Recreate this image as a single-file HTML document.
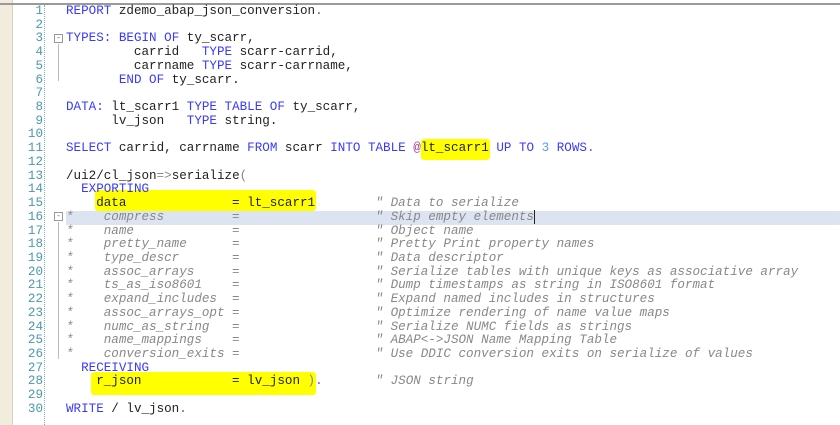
<!DOCTYPE html>
<html><head><meta charset="utf-8"><style>
body{margin:0;width:840px;height:425px;background:#fff;position:relative;overflow:hidden;font-family:"Liberation Mono",monospace;font-size:12.58px}
.strip{position:absolute;left:0;top:0;width:12px;height:425px;background:#f1ecdd;border-right:1px solid #d8d2c0}
.top{position:absolute;left:0;top:3px;width:840px;height:2px;background:#9a9a9a}
.sep{position:absolute;left:44px;top:5px;height:420px;border-left:1px dotted #7ab0b8}
.hl{position:absolute;left:66px;top:211px;width:774px;height:13.5px;background:#dbe4f0}
.y{position:absolute;background:#ffff00;border-radius:3px}
.ln{position:absolute;left:12px;width:31px;text-align:right;color:#4a9aa8;white-space:pre;line-height:13.72px}
.c{position:absolute;left:66px;white-space:pre;color:#222;line-height:13.72px}
.k{color:#3a3aff}.g{color:#888;font-style:italic}.p{color:#a040a0}.n{color:#5a9aff}.o{color:#888}
.fold{position:absolute;left:54px;width:7px;height:7px;border:1px solid #999;font-size:8px;line-height:7px;text-align:center;color:#666;background:#fff}
.vl{position:absolute;left:58px;border-left:1px solid #bbb}
.cur{position:absolute;left:534px;top:210px;width:1px;height:14px;background:#222}
</style></head><body>
<div class="strip"></div><div class="top"></div><div class="sep"></div>
<div class="hl"></div>
<div class="y" style="left:95px;top:190px;width:221px;height:21px"></div>
<div class="y" style="left:421px;top:139px;width:69px;height:21px"></div>
<div class="y" style="left:91px;top:372px;width:225px;height:23px"></div>
<div class="fold" style="top:34px">-</div><div class="vl" style="top:44px;height:37px"></div>
<div class="fold" style="top:212px">-</div><div class="vl" style="top:222px;height:137px"></div>
<div class="cur"></div>
<div class="ln" style="top:5px">1
2
3
4
5
6
7
8
9
10
11
12
13
14
15
16
17
18
19
20
21
22
23
24
25
26
27
28
29
30</div>
<div class="c" style="top:5px"><span class="k">REPORT</span> zdemo_abap_json_conversion<span class="p">.</span>

<span class="k">TYPES:</span> <span class="k">BEGIN OF</span> ty_scarr,
         carrid   <span class="k">TYPE</span> scarr-carrid,
         carrname <span class="k">TYPE</span> scarr-carrname,
       <span class="k">END OF</span> ty_scarr.

<span class="k">DATA:</span> lt_scarr1 <span class="k">TYPE TABLE OF</span> ty_scarr,
      lv_json   <span class="k">TYPE</span> string.

<span class="k">SELECT</span> carrid, carrname <span class="k">FROM</span> scarr <span class="k">INTO TABLE</span> <span class="p">@</span>lt_scarr1 <span class="k">UP TO</span> <span class="n">3</span> <span class="k">ROWS</span><span class="p">.</span>

/ui2/cl_json<span class="o">=&gt;</span>serialize<span class="o">(</span>
  <span class="k">EXPORTING</span>
    data              = lt_scarr1        <span class="g">" Data to serialize</span>
<span class="g">*    compress         =                  " Skip empty elements</span>
<span class="g">*    name             =                  " Object name</span>
<span class="g">*    pretty_name      =                  " Pretty Print property names</span>
<span class="g">*    type_descr       =                  " Data descriptor</span>
<span class="g">*    assoc_arrays     =                  " Serialize tables with unique keys as associative array</span>
<span class="g">*    ts_as_iso8601    =                  " Dump timestamps as string in ISO8601 format</span>
<span class="g">*    expand_includes  =                  " Expand named includes in structures</span>
<span class="g">*    assoc_arrays_opt =                  " Optimize rendering of name value maps</span>
<span class="g">*    numc_as_string   =                  " Serialize NUMC fields as strings</span>
<span class="g">*    name_mappings    =                  " ABAP&lt;-&gt;JSON Name Mapping Table</span>
<span class="g">*    conversion_exits =                  " Use DDIC conversion exits on serialize of values</span>
  <span class="k">RECEIVING</span>
    r_json            = lv_json <span class="o">)</span><span class="p">.</span>       <span class="g">" JSON string</span>

<span class="k">WRITE</span> / lv_json<span class="p">.</span></div>
</body></html>
